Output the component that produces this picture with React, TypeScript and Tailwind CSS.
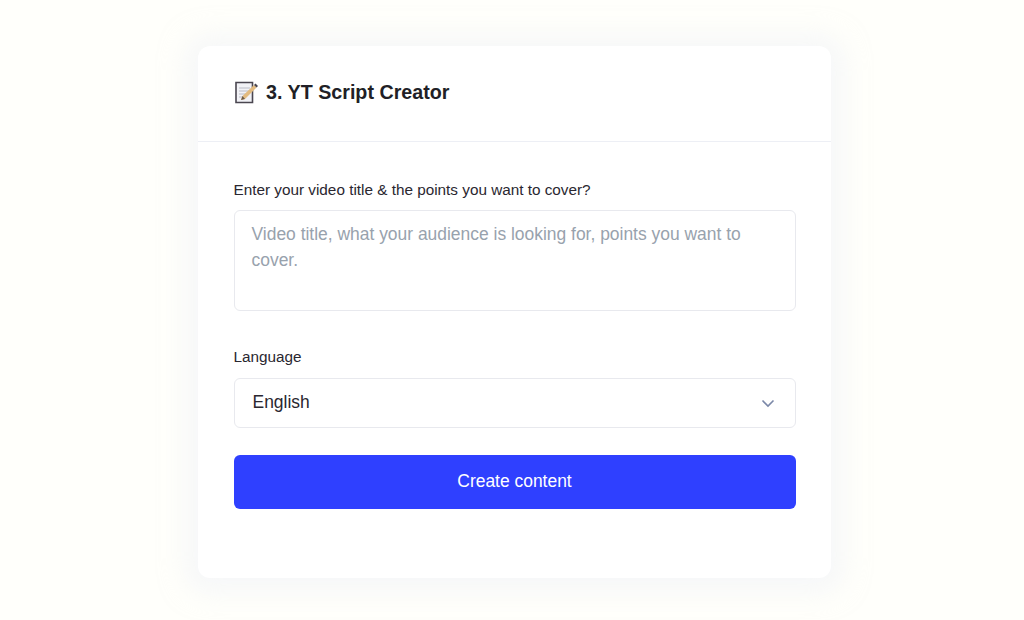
export default function App() {
  return (
    <div className="h-[620px] overflow-hidden bg-[#fffffb] pt-[46px] font-['Liberation_Sans',sans-serif]">
      {/* card */}
      <div className="ml-[198px] h-[532px] w-[633px] rounded-[12px] bg-white shadow-[0_2px_24px_14px_rgba(240,242,247,0.5)]">
        <div className="flex h-[96px] items-center gap-[7px] border-b border-[#edeff5] pb-[3px] pl-[36px]">
          <svg width="25" height="25" viewBox="0 0 25 25">
            <path d="M2 2.5h16.5v20H2z" fill="#f2f2f6" stroke="#4a4650" strokeWidth="1.6" />
            <path d="M5 8h11M5 11h10M5 14h7M5 17h5" stroke="#b9bcc6" strokeWidth="1.2" />
            <path d="M7 20l1.5-4L20 5l2.5 2.5L11 19z" fill="#e3bb80" />
            <path d="M20 5l1.5-1.5L24 6l-1.5 1.5z" fill="#4a4650" />
            <path d="M7 20l1.5-4 2.5 3z" fill="#6b5a4a" />
          </svg>
          <h1 className="text-[19.7px] leading-[28px] font-bold text-[#211f26]">3. YT Script Creator</h1>
        </div>

        <div className="px-[35.5px] pt-[39px]">
          <label className="block text-[15.3px] leading-[18px] text-[#2a2730]">
            Enter your video title &amp; the points you want to cover?
          </label>
          <div className="mt-[11px] h-[101px] rounded-[6px] border border-[#e8e9ee] px-[17px] pt-[10px] text-[17.45px] leading-[26px] text-[#98a2ad]">
            Video title, what your audience is looking for, points you want to cover.
          </div>

          <label className="mt-[37px] block text-[15.3px] leading-[18px] text-[#2a2730]">Language</label>
          <div className="mt-[12px] flex h-[50px] items-center justify-between rounded-[6px] border border-[#e8e9ee] pr-[20px] pb-px pl-[18px] text-[17.45px] text-[#2a2730]">
            <span>English</span>
            <svg width="14" height="14" viewBox="0 0 14 14" fill="none">
              <path d="M1.5 4.5L7 10l5.5-5.5" stroke="#7b88a8" strokeWidth="1.6" />
            </svg>
          </div>

          <button className="mt-[27px] flex h-[54px] w-full items-center justify-center rounded-[6px] bg-[#2f40ff] pb-[2px] text-[17.45px] text-white">
            Create content
          </button>
        </div>
      </div>
    </div>
  );
}
